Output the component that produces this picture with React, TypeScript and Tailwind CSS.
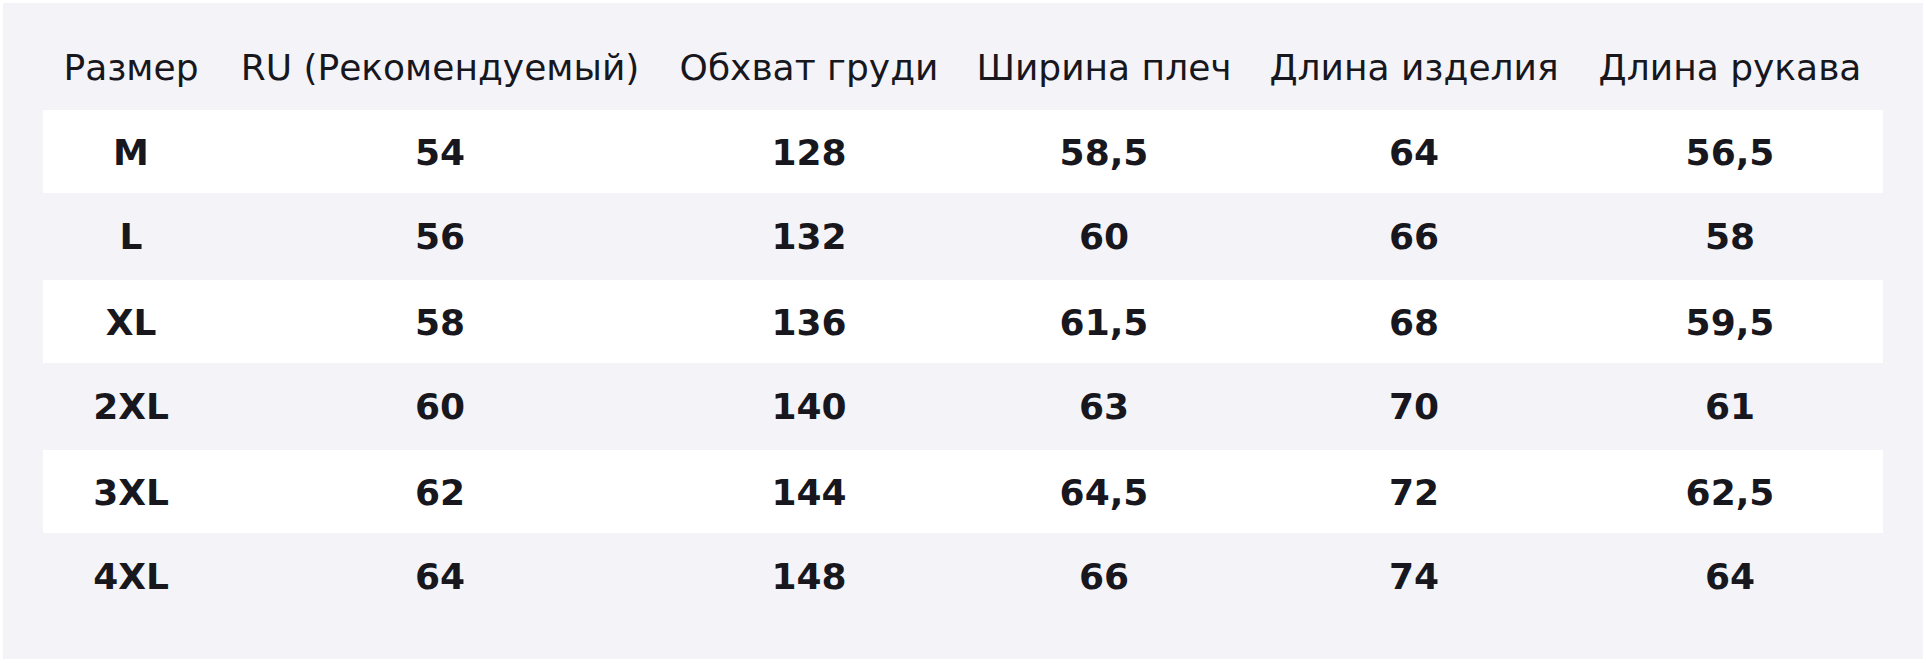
const headers = [
  "Размер",
  "RU (Рекомендуемый)",
  "Обхват груди",
  "Ширина плеч",
  "Длина изделия",
  "Длина рукава",
];

const rows = [
  ["M", "54", "128", "58,5", "64", "56,5"],
  ["L", "56", "132", "60", "66", "58"],
  ["XL", "58", "136", "61,5", "68", "59,5"],
  ["2XL", "60", "140", "63", "70", "61"],
  ["3XL", "62", "144", "64,5", "72", "62,5"],
  ["4XL", "64", "148", "66", "74", "64"],
];

const gridCols = "grid grid-cols-[176px_442px_296px_294px_326px_306px]";

export default function App() {
  return (
    <div className="bg-white p-[3px] font-['DejaVu_Sans',sans-serif] text-[#17171d]">
      <div className="bg-[#f4f4f8] px-[40px] pt-[40px] pb-[41px]">
        <div className={`${gridCols} h-[65px]`}>
          {headers.map((h) => (
            <div key={h} className="flex justify-center pt-[4px] text-[36px] leading-[42px] whitespace-nowrap">
              {h}
            </div>
          ))}
        </div>

        {rows.map((row, i) => (
          <div
            key={row[0]}
            className={`${gridCols} h-[85px] ${i % 2 === 0 ? "bg-white border-t-2 border-[#f4f4f8]" : ""}`}
          >
            {row.map((cell, j) => (
              <div key={j} className="flex items-center justify-center pt-[2px] text-[36px] leading-[42px] font-bold">
                {cell}
              </div>
            ))}
          </div>
        ))}
      </div>
    </div>
  );
}
